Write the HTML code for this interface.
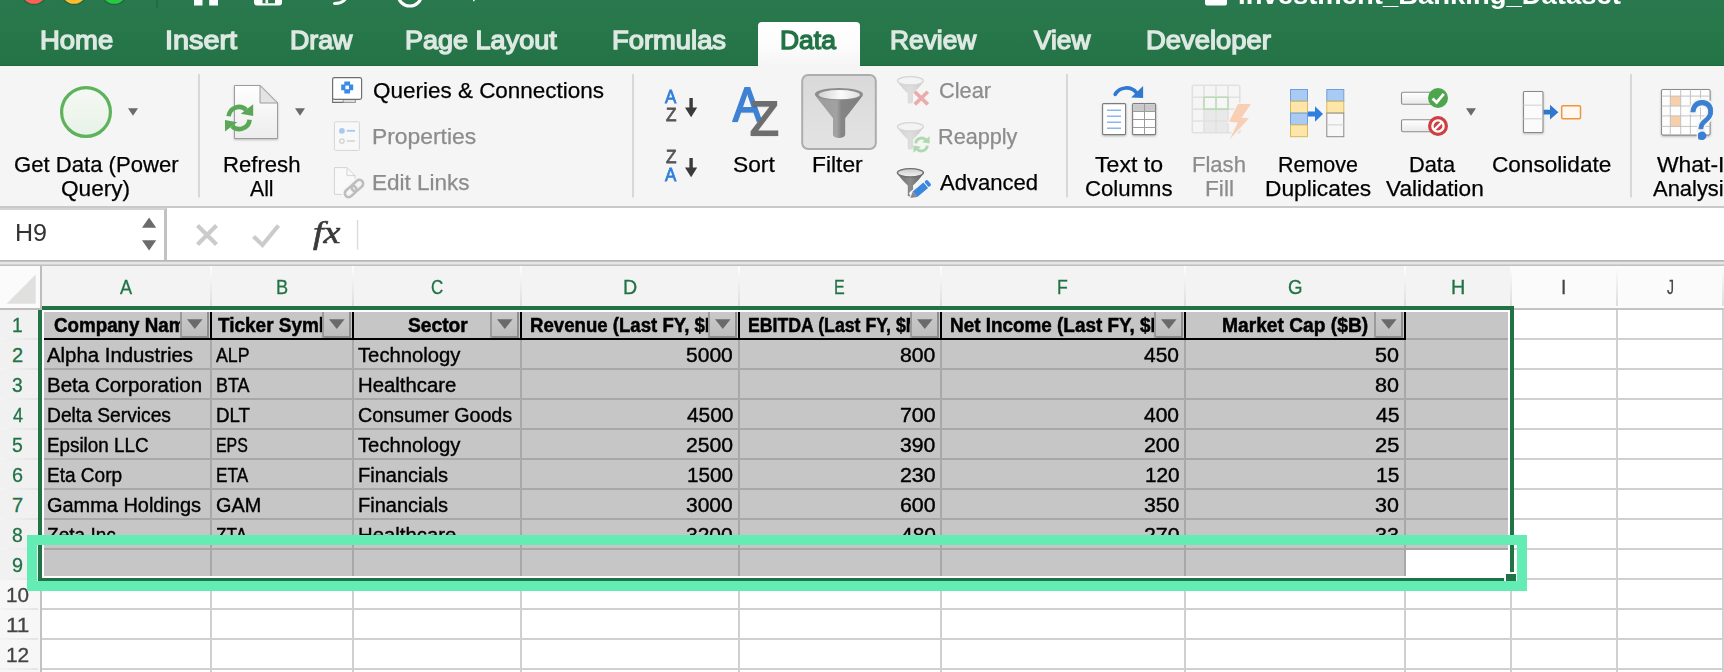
<!DOCTYPE html>
<html lang="en">
<head>
<meta charset="utf-8">
<title>Investment_Banking_Dataset</title>
<style>
html,body{margin:0;padding:0;}
body{width:1724px;height:672px;overflow:hidden;position:relative;background:#fff;font-family:"Liberation Sans",sans-serif;}
.t{position:absolute;white-space:pre;line-height:1;transform-origin:0 0;display:block;}
#app{position:absolute;left:0;top:0;width:1724px;height:672px;overflow:hidden;}
#titlebar{position:absolute;left:0;top:0;width:1724px;height:66px;background:linear-gradient(#2a794e 0,#27774b 30px,#237346 66px);box-shadow:inset 0 -1px 0 #1d6a3f;}
#datatab{position:absolute;left:758px;top:22px;width:102px;height:46px;background:linear-gradient(#fff 0,#fcfcfc 24px,#f5f5f5 44px);border-radius:4px 4px 0 0;}
#ribbon{position:absolute;left:0;top:66px;width:1724px;height:140px;background:#f5f5f5;}
#ribline{position:absolute;left:0;top:206px;width:1724px;height:2px;background:#c9c9c9;}
#fbar{position:absolute;left:0;top:208px;width:1724px;height:52px;background:#fff;}
#namebox{position:absolute;left:0;top:208px;width:164px;height:52px;border-top:2px solid #d4d4d4;border-right:3px solid #c2c2c2;box-sizing:content-box;height:50px;background:#fff;}
#fbline1{position:absolute;left:0;top:260px;width:1724px;height:6px;background:linear-gradient(#b0b0b0 0,#c4c4c4 1.5px,#e6e6e6 2.5px,#e6e6e6 3.5px,#c6c6c6 5px,#bcbcbc 6px);}
svg{position:absolute;left:0;top:0;overflow:visible;}
.colhdr{position:absolute;left:42px;top:266px;width:1682px;height:42px;background:#fbfbfb;}
.colhdr.sel{width:1470px;background:#f3f3f3;}
.rowhdr{position:absolute;left:0;top:310px;width:40px;height:362px;background:#f7f7f7;}
.rowhdr.sel{height:270px;background:#f1f1f1;}
#corner{position:absolute;left:0;top:266px;width:40px;height:42px;background:#fbfbfb;border-right:2px solid #bdbdbd;border-bottom:2px solid #bdbdbd;}
.vl{position:absolute;top:310px;width:2px;height:362px;background:#d0d0d0;}
.hl{position:absolute;left:42px;width:1682px;height:2px;background:#d0d0d0;}
.chs{position:absolute;top:266px;width:2px;height:40px;background:linear-gradient(#fdfdfd,#f0f0f0 40%,#dddddd);}
.rhs{position:absolute;left:0;width:38px;height:2px;background:linear-gradient(90deg,#f4f4f4,#e4e4e4);}
.rowhdrline{position:absolute;left:40px;top:580px;width:2px;height:92px;background:#c2c2c2;}
.colhdrline{position:absolute;left:1514px;top:308px;width:210px;height:2px;background:#c4c4c4;}
.selgap{position:absolute;left:42px;top:310px;width:1464px;height:264px;border:2px solid #fff;}
.selfill{position:absolute;left:44px;top:312px;width:1464px;height:264px;background:#c6c6c6;}
.svl{position:absolute;top:340px;width:2px;height:236px;background:#a8a8a8;}
.shl{position:absolute;left:44px;width:1464px;height:2px;background:#a8a8a8;}
.active{position:absolute;left:1406px;top:550px;width:104px;height:28px;background:#fff;}
.hb{position:absolute;background:#000;}
.fbtn{position:absolute;top:312px;width:29px;height:26px;background:linear-gradient(#c9c9c9,#bdbdbd);box-shadow:inset 2px 0 0 #9a9a9a,inset -2px -2px 0 #8e8e8e;}
.fbtn svg{position:absolute;left:0;top:0;}
#selborder div{position:absolute;background:#217346;}
#teal{position:absolute;left:27px;top:535px;width:1480px;height:36px;border:10px solid #63ecb3;}
</style>
</head>
<body>
<div id="app">

<!-- ======= title bar + tabs ======= -->
<div id="titlebar"></div>
<div id="datatab"></div>
<svg width="1724" height="66" viewBox="0 0 1724 66">
  <g stroke="#1f6840" stroke-width="1.4">
  <circle cx="34" cy="-8.7" r="13.2" fill="#ff5f57"/>
  <circle cx="74" cy="-8.7" r="13.2" fill="#febc2e"/>
  <circle cx="114.2" cy="-8.7" r="13.2" fill="#28c840"/>
  </g>
  <rect x="156.5" y="0" width="1" height="7.5" fill="#1b5e39"/>
  <rect x="194" y="-6" width="8.5" height="11.5" fill="#fff"/>
  <rect x="209.2" y="-6" width="8.8" height="11.5" fill="#fff"/>
  <rect x="254" y="-10" width="28" height="15.5" rx="3" fill="#fff"/>
  <rect x="262.5" y="-2" width="12.5" height="5.3" fill="#27774b"/>
  <rect x="265.5" y="-2" width="2.6" height="5.3" fill="#fff"/>
  <path d="M334.5 3.6 Q343 3.5 346 -2" fill="none" stroke="#fff" stroke-width="3" stroke-linecap="round"/>
  <circle cx="409.8" cy="-5.8" r="11.8" fill="none" stroke="#fff" stroke-width="3.2"/>
  <rect x="473" y="0" width="1.6" height="1.2" fill="#fff"/>
  <path d="M1205 -10h22v13.5a2 2 0 0 1-2 2h-18a2 2 0 0 1-2-2z" fill="#fff"/>
</svg>
<span class="t" style="left:39.92px;top:28.00px;font-size:25px;color:#dde9e2;transform:scaleX(1.0989);-webkit-text-stroke:1.3px #dde9e2;">Home</span>
<span class="t" style="left:165.00px;top:28.00px;font-size:25px;color:#dde9e2;transform:scaleX(1.1535);-webkit-text-stroke:1.3px #dde9e2;">Insert</span>
<span class="t" style="left:289.96px;top:28.00px;font-size:25px;color:#dde9e2;transform:scaleX(1.0695);-webkit-text-stroke:1.3px #dde9e2;">Draw</span>
<span class="t" style="left:405.44px;top:28.00px;font-size:25px;color:#dde9e2;transform:scaleX(1.0806);-webkit-text-stroke:1.3px #dde9e2;">Page Layout</span>
<span class="t" style="left:612.42px;top:28.00px;font-size:25px;color:#dde9e2;transform:scaleX(1.0947);-webkit-text-stroke:1.3px #dde9e2;">Formulas</span>
<span class="t" style="left:889.98px;top:28.00px;font-size:25px;color:#dde9e2;transform:scaleX(1.0538);-webkit-text-stroke:1.3px #dde9e2;">Review</span>
<span class="t" style="left:1033.98px;top:28.00px;font-size:25px;color:#dde9e2;transform:scaleX(1.0494);-webkit-text-stroke:1.3px #dde9e2;">View</span>
<span class="t" style="left:1145.92px;top:28.00px;font-size:25px;color:#dde9e2;transform:scaleX(1.0963);-webkit-text-stroke:1.3px #dde9e2;">Developer</span>
<span class="t" style="left:779.97px;top:28.00px;font-size:25px;color:#217346;transform:scaleX(1.0593);-webkit-text-stroke:1.3px #217346;">Data</span>
<span class="t" style="left:1237.78px;top:-18.40px;font-size:26px;color:#fff;transform:scaleX(1.0556);font-weight:bold;">Investment_Banking_Dataset</span>

<!-- ======= ribbon ======= -->
<div id="ribbon"></div>
<div id="ribline"></div>
<svg width="1724" height="672" viewBox="0 0 1724 672" font-family="Liberation Sans, sans-serif">
  <defs>
    <linearGradient id="gDoc" x1="0" y1="0" x2="0" y2="1"><stop offset="0" stop-color="#ffffff"/><stop offset="1" stop-color="#ececec"/></linearGradient>
    <linearGradient id="gFun" x1="0" y1="0" x2="1" y2="0"><stop offset="0" stop-color="#9a9a9a"/><stop offset="0.45" stop-color="#a2a2a2"/><stop offset="0.55" stop-color="#858585"/><stop offset="1" stop-color="#7e7e7e"/></linearGradient>
    <linearGradient id="gFunL" x1="0" y1="0" x2="1" y2="0"><stop offset="0" stop-color="#cdcdcd"/><stop offset="0.5" stop-color="#dcdcdc"/><stop offset="1" stop-color="#c6c6c6"/></linearGradient>
    <linearGradient id="gFunD" x1="0" y1="0" x2="1" y2="0"><stop offset="0" stop-color="#6e6e6e"/><stop offset="0.5" stop-color="#8c8c8c"/><stop offset="1" stop-color="#606060"/></linearGradient>
    <linearGradient id="gEll" x1="0" y1="0" x2="0" y2="1"><stop offset="0" stop-color="#c9c9c9"/><stop offset="1" stop-color="#f4f4f4"/></linearGradient>
    <linearGradient id="gCirc" x1="0" y1="0" x2="0" y2="1"><stop offset="0" stop-color="#f4f9f3"/><stop offset="1" stop-color="#e8f2e7"/></linearGradient>
    <linearGradient id="gBar" x1="0" y1="0" x2="0" y2="1"><stop offset="0" stop-color="#ffffff"/><stop offset="1" stop-color="#e9e9e9"/></linearGradient>
    <linearGradient id="gBtn" x1="0" y1="0" x2="0" y2="1"><stop offset="0" stop-color="#d9d9d9"/><stop offset="1" stop-color="#e3e3e3"/></linearGradient>
    <linearGradient id="gEllH" x1="0" y1="0" x2="1" y2="0"><stop offset="0" stop-color="#d2d2d2"/><stop offset="0.55" stop-color="#fbfbfb"/><stop offset="1" stop-color="#e0e0e0"/></linearGradient>
    <filter id="sh" x="-20%" y="-20%" width="140%" height="150%"><feDropShadow dx="0" dy="1" stdDeviation="0.8" flood-color="#000" flood-opacity="0.25"/></filter>
  </defs>
  <!-- group separators -->
  <g fill="#d2d2d2">
    <rect x="198.2" y="74" width="1.6" height="123.5"/>
    <rect x="632.2" y="74" width="1.6" height="123.5"/>
    <rect x="1066.2" y="74" width="1.6" height="123.5"/>
    <rect x="1630.2" y="74" width="1.6" height="123.5"/>
  </g>

  <!-- Get Data -->
  <circle cx="86" cy="112" r="24.4" fill="url(#gCirc)" stroke="#5db35c" stroke-width="3.2"/>
  <path d="M128 108.3h10l-5 7.4z" fill="#6a6a6a"/>

  <!-- Refresh All -->
  <g filter="url(#sh)">
    <path d="M234.5 85.5h25.5l17.5 17.5v35.5h-43z" fill="url(#gDoc)" stroke="#9c9c9c" stroke-width="1"/>
    <path d="M260 85.5v17.5h17.5z" fill="#e3e3e3" stroke="#9c9c9c" stroke-width="1" stroke-linejoin="round"/>
  </g>
  <g fill="none" stroke="#5aa857" stroke-width="4.6">
    <path d="M228.6 116.2a10.4 10.4 0 0 1 17.6-6.3"/>
    <path d="M249.6 119.8a10.4 10.4 0 0 1-17.6 6.3"/>
  </g>
  <path d="M253.2 104.2v11.8l-12.4-2.2z" fill="#5aa857"/>
  <path d="M225 131.6v-11.6l12.2 2.2z" fill="#5aa857"/>
  <path d="M295 108.3h10l-5 7.4z" fill="#6a6a6a"/>

  <!-- Queries & Connections -->
  <path d="M332.6 98v4.4h11" fill="none" stroke="#6e6e6e" stroke-width="1.1"/>
  <rect x="343.2" y="99" width="12.2" height="3.4" fill="#dcdcdc" stroke="#8e8e8e" stroke-width="0.9"/>
  <rect x="332.6" y="77.6" width="29" height="21.8" rx="1.8" fill="#fff" stroke="#6e6e6e" stroke-width="1.2"/>
  <path d="M344.3 81.4h5.8v3.1h3.1v5.8h-3.1v3.1h-5.8v-3.1h-3.1v-5.8h3.1z" fill="#3c8ae8"/>
  <rect x="345.4" y="85.6" width="3.6" height="3.6" fill="#fff"/>

  <!-- Properties (disabled) -->
  <rect x="334.4" y="121.8" width="25" height="28.6" rx="1" fill="#f8f8f8" stroke="#d6d6d6" stroke-width="1"/>
  <circle cx="341.9" cy="130.8" r="2.9" fill="#a8c8f0"/>
  <rect x="346.8" y="129.9" width="8.2" height="1.8" fill="#a8c8f0"/>
  <circle cx="341.9" cy="141" r="2.2" fill="none" stroke="#d2d2d2" stroke-width="1.3"/>
  <rect x="346.8" y="140.1" width="8.2" height="1.8" fill="#d8d8d8"/>

  <!-- Edit Links (disabled) -->
  <path d="M334.4 167.6h12.6l8 8v18.8h-20.6z" fill="#f9f9f9" stroke="#d3d3d3" stroke-width="1"/>
  <path d="M347 167.6v8h8" fill="none" stroke="#d3d3d3" stroke-width="1"/>
  <g fill="none" stroke="#f5f5f5" stroke-width="6" transform="rotate(-42 354 188.5)">
    <rect x="343" y="184.7" width="13" height="7.6" rx="3.8"/><rect x="352" y="184.7" width="13" height="7.6" rx="3.8"/>
  </g>
  <g fill="none" stroke="#bdbdbd" stroke-width="2.6" transform="rotate(-42 354 188.5)">
    <rect x="343" y="184.7" width="13" height="7.6" rx="3.8"/><rect x="352" y="184.7" width="13" height="7.6" rx="3.8"/>
  </g>

  <!-- Sort A-Z / Z-A small -->
  <path d="M689.4 98h3.4v9.6h4.4l-6.1 9.6-6.1-9.6h4.4z" fill="#3a3a3a"/>
  <path d="M689.4 158h3.4v9.6h4.4l-6.1 9.6-6.1-9.6h4.4z" fill="#3a3a3a"/>

  <!-- Sort big -->

  <!-- Filter (pressed) -->
  <rect x="802.2" y="75" width="73.6" height="74" rx="6" fill="url(#gBtn)" stroke="#adadad" stroke-width="2"/>
  <path d="M815 95.200L833 118.200V134.800a6.100 3.200 0 0 0 12.200 0V118.200L863 95.200z" fill="url(#gFun)"/>
  <ellipse cx="838.900" cy="94.100" rx="24.100" ry="6.100" fill="#8d8d8d"/>
  <ellipse cx="839.200" cy="94.700" rx="20.600" ry="4.600" fill="url(#gEllH)"/>

  <!-- Clear (disabled) -->
  <g opacity="0.9">
    <path d="M897.4 81.200c2.400 4.600 6.800 8.800 10.400 12.200v9.400c0 1.400 5.200 0.800 5.200-0.600v-8.800c3.600-3.400 8-7.600 10.400-12.200z" fill="url(#gFunL)"/>
    <ellipse cx="910.400" cy="80.800" rx="13" ry="4.200" fill="#f3f3f3" stroke="#d2d2d2" stroke-width="1.300"/>
    <path d="M914.800 91.800l13 12.600M927.800 91.800l-13 12.600" stroke="#f5f5f5" stroke-width="6.500" fill="none"/>
    <path d="M914.800 91.800l13 12.600M927.800 91.800l-13 12.600" stroke="#eca3a3" stroke-width="3.600" fill="none"/>
  </g>
  <!-- Reapply (disabled) -->
  <g opacity="0.9">
    <path d="M897.4 127.200c2.400 4.600 6.800 8.800 10.400 12.200v9.400c0 1.400 5.200 0.800 5.200-0.600v-8.800c3.600-3.400 8-7.600 10.400-12.200z" fill="url(#gFunL)"/>
    <ellipse cx="910.400" cy="126.800" rx="13" ry="4.200" fill="#f3f3f3" stroke="#d2d2d2" stroke-width="1.300"/>
    <circle cx="921.500" cy="144.500" r="8.500" fill="#f5f5f5"/>
    <g fill="none" stroke="#a9d6a8" stroke-width="2.800">
      <path d="M915.600 143.400a6 6 0 0 1 10.200-3.600"/>
      <path d="M927.400 145.600a6 6 0 0 1-10.200 3.600"/>
    </g>
    <path d="M929.600 136.200v7.400l-7.600-1.400z" fill="#a9d6a8"/>
    <path d="M913.400 152.800v-7.400l7.600 1.400z" fill="#a9d6a8"/>
  </g>
  <!-- Advanced -->
  <path d="M897.4 173.200c2.400 4.600 6.800 8.800 10.400 12.200v10.400c0 1.400 5.200 0.200 5.200-1.200v-9.200c3.600-3.400 8-7.600 10.400-12.200z" fill="url(#gFunD)"/>
  <ellipse cx="910.400" cy="172.800" rx="13" ry="4.200" fill="url(#gEll)" stroke="#6f6f6f" stroke-width="1.400"/>
  <g transform="rotate(-40 920 190)">
    <rect x="909" y="185" width="24" height="10" rx="2" fill="#f5f5f5"/>
    <path d="M907.500 190l6-3.600v7.200z" fill="#8a8a8a"/>
    <rect x="913.500" y="186.400" width="14" height="7.200" fill="#3b86df"/>
    <rect x="928.500" y="186.400" width="3.600" height="7.200" rx="1.500" fill="#3b86df"/>
  </g>

  <!-- Text to Columns -->
  <path d="M1115.2 94.300A13 13 0 0 1 1136.500 92.800" fill="none" stroke="#3079d2" stroke-width="3.700" stroke-linecap="round"/>
  <path d="M1143.100 85.900v12l-12-0.500z" fill="#3079d2"/>
  <g filter="url(#sh)">
    <rect x="1102.600" y="103.600" width="23" height="31" rx="1" fill="#fff" stroke="#7c7c7c" stroke-width="1.100"/>
    <rect x="1132.600" y="103.600" width="23" height="31" rx="1" fill="#fff" stroke="#7c7c7c" stroke-width="1.100"/>
  </g>
  <g stroke="#8fb6ea" stroke-width="1.400">
    <path d="M1107 110.300h14M1107 116.300h14M1107 122.300h14M1107 128.300h14"/>
  </g>
  <rect x="1133.200" y="104.200" width="21.800" height="7.400" fill="#c9c9c9"/>
  <g stroke="#9c9c9c" stroke-width="1" fill="none">
    <path d="M1132.600 111.500h23M1132.600 119.500h23M1132.600 127.500h23M1144.500 103.600v31"/>
  </g>

  <!-- Flash Fill (disabled) -->
  <rect x="1204" y="109.200" width="24" height="24" fill="#e9e9e9"/>
  <g stroke="#e1e1e1" stroke-width="1.600" fill="none">
    <rect x="1192.300" y="85.300" width="47.500" height="47.500" rx="1.800"/>
    <path d="M1204 85.300v47.500M1216 85.300v47.500M1228 85.300v47.500M1192.300 97.200h47.500M1192.300 109.100h47.500M1192.300 121h47.500"/>
  </g>
  <path d="M1204 97.200h24v11.900h-24zM1216 97.200v11.900" fill="#f6f6f6" stroke="#b9d9b8" stroke-width="1.600"/>
  <path d="M1237.900 104.100h13l-9.300 13.600 7.300 0.500-19.300 21.300 8.300-17.100-8.900-0.600z" fill="#f8cfb4" stroke="#f5f5f5" stroke-width="2.400" paint-order="stroke"/>

  <!-- Remove Duplicates -->
  <g stroke-width="1">
    <rect x="1290.500" y="89.500" width="17" height="11.800" fill="#a9caf2" stroke="#6e9fdf"/>
    <rect x="1290.500" y="101.300" width="17" height="11.800" fill="#fde6a8" stroke="#d9b85c"/>
    <rect x="1290.500" y="113.100" width="17" height="11.800" fill="#a9caf2" stroke="#6e9fdf"/>
    <rect x="1290.500" y="124.900" width="17" height="11.800" fill="#fde6a8" stroke="#d9b85c"/>
    <rect x="1326.800" y="89.500" width="17" height="11.800" fill="#a9caf2" stroke="#6e9fdf"/>
    <rect x="1326.800" y="101.300" width="17" height="11.800" fill="#fde6a8" stroke="#d9b85c"/>
    <rect x="1326.800" y="113.100" width="17" height="23.600" fill="#f7f7f7" stroke="#8a8a8a"/>
    <path d="M1326.800 124.900h17" stroke="#d0d0d0"/>
  </g>
  <path d="M1308 111.400h7v-5.200l8 7.800-8 7.800v-5.200h-7z" fill="#2f80de"/>

  <!-- Data Validation -->
  <rect x="1401.500" y="92.300" width="34" height="12" rx="1.500" fill="url(#gBar)" stroke="#8c8c8c" stroke-width="1.100"/>
  <rect x="1401.500" y="119.800" width="34" height="12" rx="1.500" fill="url(#gBar)" stroke="#8c8c8c" stroke-width="1.100"/>
  <circle cx="1438" cy="98" r="10" fill="#4ea54e"/>
  <path d="M1432.600 98.400l4 4 7.200-8.600" fill="none" stroke="#fff" stroke-width="2.800"/>
  <circle cx="1438" cy="126" r="10" fill="#cf3f42"/>
  <circle cx="1438" cy="126" r="5.600" fill="none" stroke="#fff" stroke-width="2.400"/>
  <path d="M1434 130l8-8" stroke="#fff" stroke-width="2.400"/>
  <path d="M1466 108.300h10l-5 7.400z" fill="#6a6a6a"/>

  <!-- Consolidate -->
  <g filter="url(#sh)">
    <rect x="1523.500" y="91.500" width="19.500" height="41" rx="1" fill="#fbfbfb" stroke="#8a8a8a" stroke-width="1.100"/>
  </g>
  <path d="M1523.500 105.200h19.500M1523.500 118.800h19.500" stroke="#cfcfcf" stroke-width="1"/>
  <path d="M1543.600 109.800h6.400v-5l8.400 7.400-8.400 7.400v-5h-6.400z" fill="#2f78d0"/>
  <rect x="1561.700" y="105.700" width="18.800" height="13" rx="1.200" fill="#fff8f1" stroke="#f2943d" stroke-width="1.500"/>

  <!-- What-If Analysis -->
  <g filter="url(#sh)"><rect x="1661.500" y="89.500" width="48.600" height="45.600" rx="1.500" fill="#fdfdfd" stroke="#8a8a8a" stroke-width="1.100"/></g>
  <rect x="1670.3" y="96.1" width="10.4" height="9.9" fill="#f7cfab"/>
  <rect x="1670.3" y="115.9" width="10.4" height="10.5" fill="#f7cfab"/>
  <g stroke="#bdbdbd" stroke-width="0.9">
    <path d="M1670.3 89.500v45.600M1680.7 89.500v45.600M1690.4 89.500v45.600M1700.5 89.500v45.600M1661.500 96.1h48.600M1661.500 106h48.600M1661.500 115.9h48.600M1661.500 126.4h48.600"/>
  </g>
</svg>

<span class="t" style="left:13.59px;top:155.00px;font-size:21.3px;color:#000;transform:scaleX(1.0375);-webkit-text-stroke:0.25px #000;">Get Data (Power</span>
<span class="t" style="left:61.07px;top:179.00px;font-size:21.3px;color:#000;transform:scaleX(1.0626);-webkit-text-stroke:0.25px #000;">Query)</span>
<span class="t" style="left:223.06px;top:155.00px;font-size:21.3px;color:#000;transform:scaleX(1.0392);-webkit-text-stroke:0.25px #000;">Refresh</span>
<span class="t" style="left:250.12px;top:179.00px;font-size:21.3px;color:#000;transform:scaleX(0.9961);-webkit-text-stroke:0.25px #000;">All</span>
<span class="t" style="left:373.08px;top:81.00px;font-size:21.3px;color:#000;transform:scaleX(1.0550);-webkit-text-stroke:0.25px #000;">Queries &amp; Connections</span>
<span class="t" style="left:372.31px;top:127.00px;font-size:21.3px;color:#8c8c8c;transform:scaleX(1.0730);-webkit-text-stroke:0.25px #8c8c8c;">Properties</span>
<span class="t" style="left:372.33px;top:173.00px;font-size:21.3px;color:#8c8c8c;transform:scaleX(1.0572);-webkit-text-stroke:0.25px #8c8c8c;">Edit Links</span>
<span class="t" style="left:733.07px;top:155.00px;font-size:21.3px;color:#000;transform:scaleX(1.0680);-webkit-text-stroke:0.25px #000;">Sort</span>
<span class="t" style="left:812.31px;top:155.00px;font-size:21.3px;color:#000;transform:scaleX(1.0704);-webkit-text-stroke:0.25px #000;">Filter</span>
<span class="t" style="left:939.10px;top:81.00px;font-size:21.3px;color:#8c8c8c;transform:scaleX(1.0229);-webkit-text-stroke:0.25px #8c8c8c;">Clear</span>
<span class="t" style="left:938.40px;top:127.00px;font-size:21.3px;color:#8c8c8c;transform:scaleX(1.0163);-webkit-text-stroke:0.25px #8c8c8c;">Reapply</span>
<span class="t" style="left:940.13px;top:173.00px;font-size:21.3px;color:#000;transform:scaleX(1.0359);-webkit-text-stroke:0.25px #000;">Advanced</span>
<span class="t" style="left:1094.70px;top:155.00px;font-size:21.3px;color:#000;transform:scaleX(1.0850);-webkit-text-stroke:0.25px #000;">Text to</span>
<span class="t" style="left:1085.09px;top:179.00px;font-size:21.3px;color:#000;transform:scaleX(1.0418);-webkit-text-stroke:0.25px #000;">Columns</span>
<span class="t" style="left:1192.37px;top:155.00px;font-size:21.3px;color:#8c8c8c;transform:scaleX(1.0347);-webkit-text-stroke:0.25px #8c8c8c;">Flash</span>
<span class="t" style="left:1204.82px;top:179.00px;font-size:21.3px;color:#8c8c8c;transform:scaleX(1.0645);-webkit-text-stroke:0.25px #8c8c8c;">Fill</span>
<span class="t" style="left:1277.81px;top:155.00px;font-size:21.3px;color:#000;transform:scaleX(1.0089);-webkit-text-stroke:0.25px #000;">Remove</span>
<span class="t" style="left:1264.72px;top:179.00px;font-size:21.3px;color:#000;transform:scaleX(1.0684);-webkit-text-stroke:0.25px #000;">Duplicates</span>
<span class="t" style="left:1409.39px;top:155.00px;font-size:21.3px;color:#000;transform:scaleX(1.0230);-webkit-text-stroke:0.25px #000;">Data</span>
<span class="t" style="left:1385.53px;top:179.00px;font-size:21.3px;color:#000;transform:scaleX(1.0630);-webkit-text-stroke:0.25px #000;">Validation</span>
<span class="t" style="left:1492.07px;top:155.00px;font-size:21.3px;color:#000;transform:scaleX(1.0605);-webkit-text-stroke:0.25px #000;">Consolidate</span>
<span class="t" style="left:1657.13px;top:155.00px;font-size:21.3px;color:#000;transform:scaleX(1.0750);-webkit-text-stroke:0.25px #000;">What-If</span>
<span class="t" style="left:1653.13px;top:179.00px;font-size:21.3px;color:#000;transform:scaleX(1.0300);-webkit-text-stroke:0.25px #000;">Analysis</span>
<span class="t" style="left:665.36px;top:87.40px;font-size:19px;color:#2f7fdb;transform:scaleX(0.8889);-webkit-text-stroke:0.8px #2f7fdb;">A</span>
<span class="t" style="left:665.82px;top:105.40px;font-size:19px;color:#555;transform:scaleX(0.9027);-webkit-text-stroke:0.8px #555;">Z</span>
<span class="t" style="left:665.82px;top:147.40px;font-size:19px;color:#555;transform:scaleX(0.9027);-webkit-text-stroke:0.8px #555;">Z</span>
<span class="t" style="left:665.36px;top:165.40px;font-size:19px;color:#2f7fdb;transform:scaleX(0.8889);-webkit-text-stroke:0.8px #2f7fdb;">A</span>
<span class="t" style="left:732.51px;top:81.10px;font-size:47.5px;color:#3d82d4;transform:scaleX(0.8987);-webkit-text-stroke:1.8px #3d82d4;text-shadow:0 1px 1.5px rgba(0,0,0,0.3);">A</span>
<span class="t" style="left:750.41px;top:95.40px;font-size:48px;color:#6e6e6e;transform:scaleX(0.9826);-webkit-text-stroke:1.8px #6e6e6e;text-shadow:0 1px 1.5px rgba(0,0,0,0.3);">Z</span>
<span class="t" style="left:1689.09px;top:93.40px;font-size:55px;color:#3b7fd0;transform:scaleX(0.8298);color:#f5f5f5;-webkit-text-stroke:5px #f5f5f5;">?</span><span class="t" style="left:1689.09px;top:93.40px;font-size:55px;color:#3b7fd0;transform:scaleX(0.8298);-webkit-text-stroke:1.0px #3b7fd0;">?</span>
<svg width="1724" height="672" viewBox="0 0 1724 672"><circle cx="1702.1" cy="135.8" r="4.3" fill="#3b7fd0"/></svg>

<!-- ======= formula bar ======= -->
<div id="fbar"></div>
<div id="namebox"></div>
<div id="fbline1"></div>
<svg width="1724" height="672" viewBox="0 0 1724 672">
  <path d="M142 227.8l7.1-10.2 7.1 10.2z" fill="#6b6b6b"/>
  <path d="M142 240.2l7.1 10.3 7.1-10.3z" fill="#6b6b6b"/>
  <path d="M197.5 225.5l19 19M216.5 225.5l-19 19" stroke="#cbcbcb" stroke-width="4.2" fill="none"/>
  <path d="M253.5 236.5l9 8.5 16-19.5" stroke="#cbcbcb" stroke-width="4.2" fill="none"/>
  <rect x="356.8" y="220" width="1.5" height="29.6" fill="#dcdcdc"/>
</svg>
<span class="t" style="left:15.04px;top:222.00px;font-size:23px;color:#333;transform:scaleX(1.0898);">H9</span>
<span class="t" style="left:312.87px;top:217.00px;font-size:31px;color:#3a3a3a;transform:scaleX(1.2294);font-style:italic;font-family:'Liberation Serif', serif;-webkit-text-stroke:0.6px #3a3a3a;">fx</span>

<!-- ======= sheet ======= -->
<div class="colhdr"></div><div class="colhdr sel"></div><div class="rowhdr"></div><div class="rowhdr sel"></div>
<div class="vl" style="left:210px"></div>
<div class="vl" style="left:352px"></div>
<div class="vl" style="left:520px"></div>
<div class="vl" style="left:738px"></div>
<div class="vl" style="left:940px"></div>
<div class="vl" style="left:1184px"></div>
<div class="vl" style="left:1404px"></div>
<div class="vl" style="left:1510px"></div>
<div class="vl" style="left:1616px"></div>
<div class="vl" style="left:1722px"></div>
<div class="hl" style="top:338px"></div>
<div class="hl" style="top:368px"></div>
<div class="hl" style="top:398px"></div>
<div class="hl" style="top:428px"></div>
<div class="hl" style="top:458px"></div>
<div class="hl" style="top:488px"></div>
<div class="hl" style="top:518px"></div>
<div class="hl" style="top:548px"></div>
<div class="hl" style="top:578px"></div>
<div class="hl" style="top:608px"></div>
<div class="hl" style="top:638px"></div>
<div class="hl" style="top:668px"></div>
<div class="chs" style="left:210px"></div>
<div class="chs" style="left:352px"></div>
<div class="chs" style="left:520px"></div>
<div class="chs" style="left:738px"></div>
<div class="chs" style="left:940px"></div>
<div class="chs" style="left:1184px"></div>
<div class="chs" style="left:1404px"></div>
<div class="chs" style="left:1510px"></div>
<div class="chs" style="left:1616px"></div>
<div class="chs" style="left:1722px"></div>
<div class="rhs" style="top:338px"></div>
<div class="rhs" style="top:368px"></div>
<div class="rhs" style="top:398px"></div>
<div class="rhs" style="top:428px"></div>
<div class="rhs" style="top:458px"></div>
<div class="rhs" style="top:488px"></div>
<div class="rhs" style="top:518px"></div>
<div class="rhs" style="top:548px"></div>
<div class="rhs" style="top:578px"></div>
<div class="rhs" style="top:608px"></div>
<div class="rhs" style="top:638px"></div>
<div class="rhs" style="top:668px"></div>
<div class="selgap"></div><div class="selfill"></div>
<div class="svl" style="left:210px"></div>
<div class="svl" style="left:352px"></div>
<div class="svl" style="left:520px"></div>
<div class="svl" style="left:738px"></div>
<div class="svl" style="left:940px"></div>
<div class="svl" style="left:1184px"></div>
<div class="svl" style="left:1404px"></div>
<div class="shl" style="top:338px"></div>
<div class="shl" style="top:368px"></div>
<div class="shl" style="top:398px"></div>
<div class="shl" style="top:428px"></div>
<div class="shl" style="top:458px"></div>
<div class="shl" style="top:488px"></div>
<div class="shl" style="top:518px"></div>
<div class="shl" style="top:548px"></div>
<div class="active"></div>
<div class="hb" style="left:44px;top:338px;width:1362px;height:2px"></div>
<div class="hb" style="left:210px;top:312px;width:2px;height:28px"></div>
<div class="hb" style="left:352px;top:312px;width:2px;height:28px"></div>
<div class="hb" style="left:520px;top:312px;width:2px;height:28px"></div>
<div class="hb" style="left:738px;top:312px;width:2px;height:28px"></div>
<div class="hb" style="left:940px;top:312px;width:2px;height:28px"></div>
<div class="hb" style="left:1184px;top:312px;width:2px;height:28px"></div>
<div class="hb" style="left:1404px;top:312px;width:2px;height:28px"></div>
<div id="corner"></div>
<svg width="1724" height="672" viewBox="0 0 1724 672"><path d="M35.7 274.5v29.2h-29.2z" fill="#e0e0de"/></svg>
<div class="rowhdrline"></div><div class="colhdrline"></div>
<span class="t" style="left:119.94px;top:277.00px;font-size:20px;color:#217346;transform:scaleX(0.9051);-webkit-text-stroke:0.3px #217346;">A</span>
<span class="t" style="left:275.68px;top:277.00px;font-size:20px;color:#217346;transform:scaleX(0.9091);-webkit-text-stroke:0.3px #217346;">B</span>
<span class="t" style="left:430.78px;top:277.00px;font-size:20px;color:#217346;transform:scaleX(0.8462);-webkit-text-stroke:0.3px #217346;">C</span>
<span class="t" style="left:622.57px;top:277.00px;font-size:20px;color:#217346;transform:scaleX(0.9836);-webkit-text-stroke:0.3px #217346;">D</span>
<span class="t" style="left:834.33px;top:277.00px;font-size:20px;color:#217346;transform:scaleX(0.8036);-webkit-text-stroke:0.3px #217346;">E</span>
<span class="t" style="left:1057.22px;top:277.00px;font-size:20px;color:#217346;transform:scaleX(0.8824);-webkit-text-stroke:0.3px #217346;">F</span>
<span class="t" style="left:1287.96px;top:277.00px;font-size:20px;color:#217346;transform:scaleX(0.9328);-webkit-text-stroke:0.3px #217346;">G</span>
<span class="t" style="left:1450.81px;top:277.00px;font-size:20px;color:#217346;transform:scaleX(0.9914);-webkit-text-stroke:0.3px #217346;">H</span>
<span class="t" style="left:1561.32px;top:277.00px;font-size:20px;color:#444;transform:scaleX(0.9565);-webkit-text-stroke:0.3px #444;">I</span>
<span class="t" style="left:1666.90px;top:277.00px;font-size:20px;color:#444;transform:scaleX(0.6977);-webkit-text-stroke:0.3px #444;">J</span>
<span class="t" style="left:12.04px;top:315.00px;font-size:20px;color:#217346;transform:scaleX(0.9667);-webkit-text-stroke:0.3px #217346;">1</span>
<span class="t" style="left:12.10px;top:345.00px;font-size:20px;color:#217346;transform:scaleX(1.0000);-webkit-text-stroke:0.3px #217346;">2</span>
<span class="t" style="left:12.42px;top:375.00px;font-size:20px;color:#217346;transform:scaleX(0.9596);-webkit-text-stroke:0.3px #217346;">3</span>
<span class="t" style="left:12.72px;top:405.00px;font-size:20px;color:#217346;transform:scaleX(0.9048);-webkit-text-stroke:0.3px #217346;">4</span>
<span class="t" style="left:12.32px;top:435.00px;font-size:20px;color:#217346;transform:scaleX(0.9694);-webkit-text-stroke:0.3px #217346;">5</span>
<span class="t" style="left:12.11px;top:465.00px;font-size:20px;color:#217346;transform:scaleX(0.9896);-webkit-text-stroke:0.3px #217346;">6</span>
<span class="t" style="left:12.10px;top:495.00px;font-size:20px;color:#217346;transform:scaleX(1.0000);-webkit-text-stroke:0.3px #217346;">7</span>
<span class="t" style="left:12.32px;top:525.00px;font-size:20px;color:#217346;transform:scaleX(0.9694);-webkit-text-stroke:0.3px #217346;">8</span>
<span class="t" style="left:12.21px;top:555.00px;font-size:20px;color:#217346;transform:scaleX(0.9896);-webkit-text-stroke:0.3px #217346;">9</span>
<span class="t" style="left:5.81px;top:585.00px;font-size:20px;color:#444;transform:scaleX(1.0333);-webkit-text-stroke:0.3px #444;">10</span>
<span class="t" style="left:5.68px;top:615.00px;font-size:20px;color:#444;transform:scaleX(1.1267);-webkit-text-stroke:0.3px #444;">11</span>
<span class="t" style="left:5.79px;top:645.00px;font-size:20px;color:#444;transform:scaleX(1.0436);-webkit-text-stroke:0.3px #444;">12</span>
<span class="t" style="left:54.13px;top:315.00px;font-size:20px;color:#000;transform:scaleX(0.9380);font-weight:bold;-webkit-text-stroke:0.5px #000;">Company Name</span>
<span class="t" style="left:218.05px;top:315.00px;font-size:20px;color:#000;transform:scaleX(0.9480);font-weight:bold;-webkit-text-stroke:0.5px #000;">Ticker Symbol</span>
<span class="t" style="left:407.76px;top:315.00px;font-size:20px;color:#000;transform:scaleX(0.9603);font-weight:bold;-webkit-text-stroke:0.5px #000;">Sector</span>
<span class="t" style="left:529.92px;top:315.00px;font-size:20px;color:#000;transform:scaleX(0.9308);font-weight:bold;-webkit-text-stroke:0.5px #000;">Revenue (Last FY, $M)</span>
<span class="t" style="left:748.37px;top:315.00px;font-size:20px;color:#000;transform:scaleX(0.8854);font-weight:bold;-webkit-text-stroke:0.5px #000;">EBITDA (Last FY, $M)</span>
<span class="t" style="left:949.91px;top:315.00px;font-size:20px;color:#000;transform:scaleX(0.9444);font-weight:bold;-webkit-text-stroke:0.5px #000;">Net Income (Last FY, $M)</span>
<span class="t" style="left:1221.99px;top:315.00px;font-size:20px;color:#000;transform:scaleX(0.9602);font-weight:bold;-webkit-text-stroke:0.5px #000;">Market Cap ($B)</span>
<span class="t" style="left:46.50px;top:345.00px;font-size:20px;color:#000;transform:scaleX(1.0181);-webkit-text-stroke:0.4px #000;">Alpha Industries</span>
<span class="t" style="left:216.20px;top:345.00px;font-size:20px;color:#000;transform:scaleX(0.8874);-webkit-text-stroke:0.4px #000;">ALP</span>
<span class="t" style="left:358.40px;top:345.00px;font-size:20px;color:#000;transform:scaleX(1.0120);-webkit-text-stroke:0.4px #000;">Technology</span>
<span class="t" style="left:686.27px;top:345.00px;font-size:20px;color:#000;transform:scaleX(1.0514);-webkit-text-stroke:0.4px #000;">5000</span>
<span class="t" style="left:900.16px;top:345.00px;font-size:20px;color:#000;transform:scaleX(1.0606);-webkit-text-stroke:0.4px #000;">800</span>
<span class="t" style="left:1144.34px;top:345.00px;font-size:20px;color:#000;transform:scaleX(1.0476);-webkit-text-stroke:0.4px #000;">450</span>
<span class="t" style="left:1375.35px;top:345.00px;font-size:20px;color:#000;transform:scaleX(1.0770);-webkit-text-stroke:0.4px #000;">50</span>
<span class="t" style="left:46.50px;top:375.00px;font-size:20px;color:#000;transform:scaleX(1.0254);-webkit-text-stroke:0.4px #000;">Beta Corporation</span>
<span class="t" style="left:216.20px;top:375.00px;font-size:20px;color:#000;transform:scaleX(0.8972);-webkit-text-stroke:0.4px #000;">BTA</span>
<span class="t" style="left:358.40px;top:375.00px;font-size:20px;color:#000;transform:scaleX(1.0157);-webkit-text-stroke:0.4px #000;">Healthcare</span>
<span class="t" style="left:1375.35px;top:375.00px;font-size:20px;color:#000;transform:scaleX(1.0770);-webkit-text-stroke:0.4px #000;">80</span>
<span class="t" style="left:46.50px;top:405.00px;font-size:20px;color:#000;transform:scaleX(0.9616);-webkit-text-stroke:0.4px #000;">Delta Services</span>
<span class="t" style="left:216.20px;top:405.00px;font-size:20px;color:#000;transform:scaleX(0.9368);-webkit-text-stroke:0.4px #000;">DLT</span>
<span class="t" style="left:358.40px;top:405.00px;font-size:20px;color:#000;transform:scaleX(0.9831);-webkit-text-stroke:0.4px #000;">Consumer Goods</span>
<span class="t" style="left:686.69px;top:405.00px;font-size:20px;color:#000;transform:scaleX(1.0418);-webkit-text-stroke:0.4px #000;">4500</span>
<span class="t" style="left:899.95px;top:405.00px;font-size:20px;color:#000;transform:scaleX(1.0672);-webkit-text-stroke:0.4px #000;">700</span>
<span class="t" style="left:1144.34px;top:405.00px;font-size:20px;color:#000;transform:scaleX(1.0476);-webkit-text-stroke:0.4px #000;">400</span>
<span class="t" style="left:1375.79px;top:405.00px;font-size:20px;color:#000;transform:scaleX(1.0619);-webkit-text-stroke:0.4px #000;">45</span>
<span class="t" style="left:46.50px;top:435.00px;font-size:20px;color:#000;transform:scaleX(0.9413);-webkit-text-stroke:0.4px #000;">Epsilon LLC</span>
<span class="t" style="left:216.20px;top:435.00px;font-size:20px;color:#000;transform:scaleX(0.7948);-webkit-text-stroke:0.4px #000;">EPS</span>
<span class="t" style="left:358.40px;top:435.00px;font-size:20px;color:#000;transform:scaleX(1.0120);-webkit-text-stroke:0.4px #000;">Technology</span>
<span class="t" style="left:686.05px;top:435.00px;font-size:20px;color:#000;transform:scaleX(1.0563);-webkit-text-stroke:0.4px #000;">2500</span>
<span class="t" style="left:900.27px;top:435.00px;font-size:20px;color:#000;transform:scaleX(1.0573);-webkit-text-stroke:0.4px #000;">390</span>
<span class="t" style="left:1143.70px;top:435.00px;font-size:20px;color:#000;transform:scaleX(1.0672);-webkit-text-stroke:0.4px #000;">200</span>
<span class="t" style="left:1375.13px;top:435.00px;font-size:20px;color:#000;transform:scaleX(1.0925);-webkit-text-stroke:0.4px #000;">25</span>
<span class="t" style="left:46.50px;top:465.00px;font-size:20px;color:#000;transform:scaleX(0.9514);-webkit-text-stroke:0.4px #000;">Eta Corp</span>
<span class="t" style="left:216.20px;top:465.00px;font-size:20px;color:#000;transform:scaleX(0.8574);-webkit-text-stroke:0.4px #000;">ETA</span>
<span class="t" style="left:358.40px;top:465.00px;font-size:20px;color:#000;transform:scaleX(1.0007);-webkit-text-stroke:0.4px #000;">Financials</span>
<span class="t" style="left:687.06px;top:465.00px;font-size:20px;color:#000;transform:scaleX(1.0335);-webkit-text-stroke:0.4px #000;">1500</span>
<span class="t" style="left:899.95px;top:465.00px;font-size:20px;color:#000;transform:scaleX(1.0672);-webkit-text-stroke:0.4px #000;">230</span>
<span class="t" style="left:1144.70px;top:465.00px;font-size:20px;color:#000;transform:scaleX(1.0366);-webkit-text-stroke:0.4px #000;">120</span>
<span class="t" style="left:1376.14px;top:465.00px;font-size:20px;color:#000;transform:scaleX(1.0456);-webkit-text-stroke:0.4px #000;">15</span>
<span class="t" style="left:46.50px;top:495.00px;font-size:20px;color:#000;transform:scaleX(0.9967);-webkit-text-stroke:0.4px #000;">Gamma Holdings</span>
<span class="t" style="left:216.20px;top:495.00px;font-size:20px;color:#000;transform:scaleX(0.9910);-webkit-text-stroke:0.4px #000;">GAM</span>
<span class="t" style="left:358.40px;top:495.00px;font-size:20px;color:#000;transform:scaleX(1.0007);-webkit-text-stroke:0.4px #000;">Financials</span>
<span class="t" style="left:686.38px;top:495.00px;font-size:20px;color:#000;transform:scaleX(1.0490);-webkit-text-stroke:0.4px #000;">3000</span>
<span class="t" style="left:899.95px;top:495.00px;font-size:20px;color:#000;transform:scaleX(1.0672);-webkit-text-stroke:0.4px #000;">600</span>
<span class="t" style="left:1144.02px;top:495.00px;font-size:20px;color:#000;transform:scaleX(1.0573);-webkit-text-stroke:0.4px #000;">350</span>
<span class="t" style="left:1375.46px;top:495.00px;font-size:20px;color:#000;transform:scaleX(1.0719);-webkit-text-stroke:0.4px #000;">30</span>
<span class="t" style="left:46.50px;top:525.00px;font-size:20px;color:#000;transform:scaleX(0.9520);-webkit-text-stroke:0.4px #000;">Zeta Inc</span>
<span class="t" style="left:216.20px;top:525.00px;font-size:20px;color:#000;transform:scaleX(0.8564);-webkit-text-stroke:0.4px #000;">ZTA</span>
<span class="t" style="left:358.40px;top:525.00px;font-size:20px;color:#000;transform:scaleX(1.0157);-webkit-text-stroke:0.4px #000;">Healthcare</span>
<span class="t" style="left:686.38px;top:525.00px;font-size:20px;color:#000;transform:scaleX(1.0490);-webkit-text-stroke:0.4px #000;">3200</span>
<span class="t" style="left:900.59px;top:525.00px;font-size:20px;color:#000;transform:scaleX(1.0476);-webkit-text-stroke:0.4px #000;">480</span>
<span class="t" style="left:1143.70px;top:525.00px;font-size:20px;color:#000;transform:scaleX(1.0672);-webkit-text-stroke:0.4px #000;">270</span>
<span class="t" style="left:1375.46px;top:525.00px;font-size:20px;color:#000;transform:scaleX(1.0770);-webkit-text-stroke:0.4px #000;">33</span>
<div class="fbtn" style="left:180px"><svg width="29" height="26" viewBox="0 0 29 26"><path d="M7 7.2h15.6l-7.8 9.8z" fill="#6a6a6a"/></svg></div>
<div class="fbtn" style="left:322px"><svg width="29" height="26" viewBox="0 0 29 26"><path d="M7 7.2h15.6l-7.8 9.8z" fill="#6a6a6a"/></svg></div>
<div class="fbtn" style="left:490px"><svg width="29" height="26" viewBox="0 0 29 26"><path d="M7 7.2h15.6l-7.8 9.8z" fill="#6a6a6a"/></svg></div>
<div class="fbtn" style="left:708px"><svg width="29" height="26" viewBox="0 0 29 26"><path d="M7 7.2h15.6l-7.8 9.8z" fill="#6a6a6a"/></svg></div>
<div class="fbtn" style="left:910px"><svg width="29" height="26" viewBox="0 0 29 26"><path d="M7 7.2h15.6l-7.8 9.8z" fill="#6a6a6a"/></svg></div>
<div class="fbtn" style="left:1154px"><svg width="29" height="26" viewBox="0 0 29 26"><path d="M7 7.2h15.6l-7.8 9.8z" fill="#6a6a6a"/></svg></div>
<div class="fbtn" style="left:1374px"><svg width="29" height="26" viewBox="0 0 29 26"><path d="M7 7.2h15.6l-7.8 9.8z" fill="#6a6a6a"/></svg></div>
<div id="selborder">
  <div style="left:42px;top:306px;width:1472px;height:4px"></div>
  <div style="left:38px;top:310px;width:4px;height:272px"></div>
  <div style="left:1510px;top:306px;width:4px;height:266px"></div>
  <div style="left:38px;top:578px;width:1466px;height:4px"></div>
  <div style="left:1506px;top:574px;width:9.5px;height:7.5px;box-shadow:0 0 0 1.5px #fff"></div>
</div>
<div id="teal"></div>
</div>
</body>
</html>
